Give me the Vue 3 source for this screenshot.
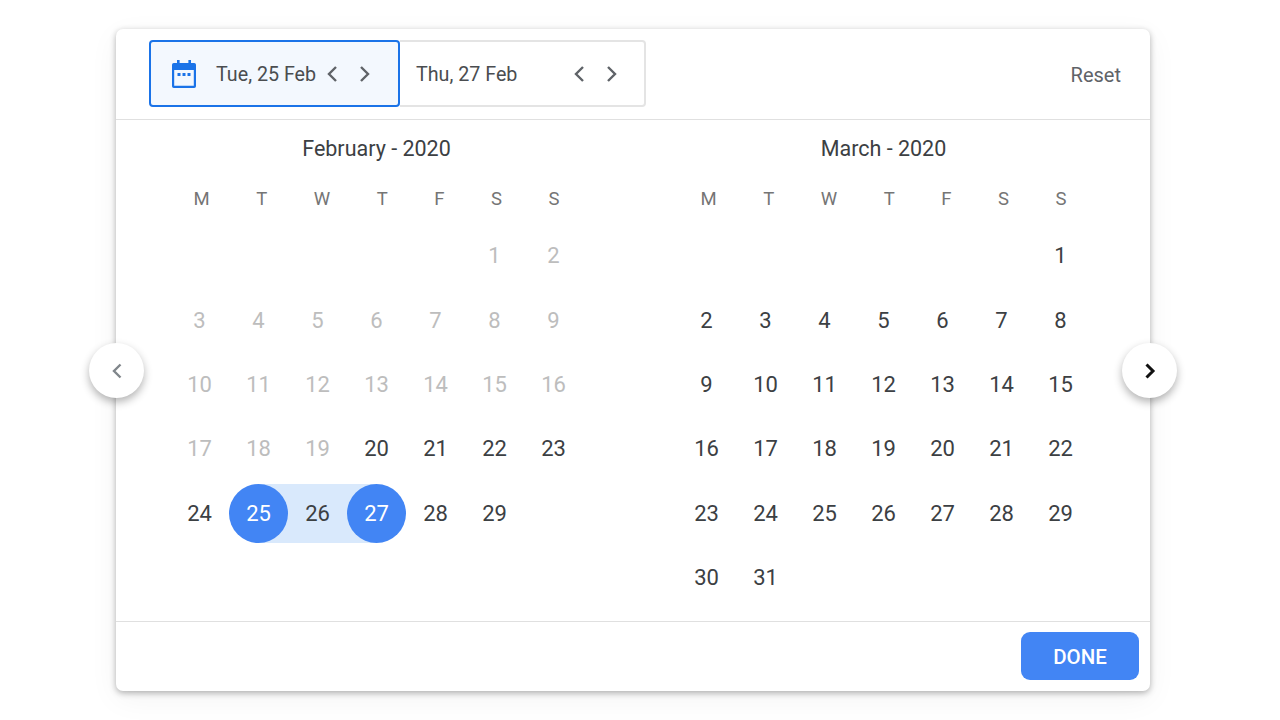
<template>
  <div class="page">
    <div class="picker">
      <header class="picker__head">
        <div class="range">
          <div class="range__tab range__tab--active">
            <svg class="range__icon" width="26" height="30" viewBox="0 0 26 30">
              <path fill="#1a73e8" fill-rule="evenodd" d="M6 1h2.6v3h8.8V1H20v3h3.2A1.8 1.8 0 0 1 25 5.8v21.4a1.8 1.8 0 0 1-1.8 1.8H2.8A1.8 1.8 0 0 1 1 27.200V5.800A1.800 1.800 0 0 1 2.800 4H6zM3.200 11v15.800h19.600V11z" />
              <rect x="6.500" y="14" width="3" height="3" fill="#1a73e8" />
              <rect x="11.500" y="14" width="3" height="3" fill="#1a73e8" />
              <rect x="16.500" y="14" width="3" height="3" fill="#1a73e8" />
            </svg>
            <span class="range__date">Tue, 25 Feb</span>
            <span class="range__arrows range__arrows--tight">
              <svg width="12" height="18" viewBox="0 0 12 18"><path class="chev" d="M10 2 3 9l7 7" /></svg>
              <svg width="12" height="18" viewBox="0 0 12 18"><path class="chev" d="M2 2l7 7-7 7" /></svg>
            </span>
          </div>
          <div class="range__tab range__tab--end">
            <span class="range__date">Thu, 27 Feb</span>
            <span class="range__arrows">
              <svg width="12" height="18" viewBox="0 0 12 18"><path class="chev" d="M10 2 3 9l7 7" /></svg>
              <svg width="12" height="18" viewBox="0 0 12 18"><path class="chev" d="M2 2l7 7-7 7" /></svg>
            </span>
          </div>
        </div>
        <span class="picker__reset">Reset</span>
      </header>

      <div class="picker__body">
        <section v-for="month in months" :key="month.title" class="month">
          <h3 class="month__title">{{ month.title }}</h3>
          <div class="month__week">
            <span v-for="(d, idx) in weekDays" :key="idx">{{ d }}</span>
          </div>
          <div class="month__grid">
            <div
              v-for="(cell, idx) in month.cells"
              :key="idx"
              class="day"
              :class="cell ? {
                'day--off': cell.off,
                'day--from': cell.mark === 'from',
                'day--mid': cell.mark === 'mid',
                'day--to': cell.mark === 'to',
              } : null"
            >
              <span v-if="cell" class="day__num">{{ cell.n }}</span>
            </div>
          </div>
        </section>
      </div>

      <footer class="picker__foot">
        <button class="done">DONE</button>
      </footer>

      <button class="nav nav--prev">
        <svg width="14" height="18" viewBox="0 0 14 18"><path class="chev chev--grey" d="M10.500 2.500 4 9l6.500 6.500" /></svg>
      </button>
      <button class="nav nav--next">
        <svg width="14" height="18" viewBox="0 0 14 18"><path class="chev chev--dark" d="M3.500 2.500 10 9l-6.500 6.500" /></svg>
      </button>
    </div>
  </div>
</template>

<script setup>
const weekDays = ['M', 'T', 'W', 'T', 'F', 'S', 'S']

function buildMonth(title, lead, total, opts = {}) {
  const cells = Array(lead).fill(null)
  for (let n = 1; n <= total; n++) {
    let mark = null
    if (opts.from === n) mark = 'from'
    else if (opts.to === n) mark = 'to'
    else if (n > opts.from && n < opts.to) mark = 'mid'
    cells.push({ n, off: n < (opts.firstActive || 0), mark })
  }
  return { title, cells }
}

const months = [
  buildMonth('February - 2020', 5, 29, { firstActive: 20, from: 25, to: 27 }),
  buildMonth('March - 2020', 6, 31),
]
</script>

<style scoped>
.page {
  width: 1280px;
  height: 720px;
  padding-top: 29px;
  box-sizing: border-box;
  background: #fff;
  font-family: Roboto, "Liberation Sans", sans-serif;
  color: #3c4043;
  overflow: hidden;
}

.picker {
  position: relative;
  width: 1034px;
  height: 662px;
  margin-left: 116px;
  display: flex;
  flex-direction: column;
  background: #fff;
  border-radius: 7px;
  box-shadow: 0 2px 6px rgba(0, 0, 0, 0.3), 0 8px 30px rgba(0, 0, 0, 0.05);
}

.picker__head {
  height: 91px;
  box-sizing: border-box;
  flex: none;
  display: flex;
  align-items: center;
  justify-content: space-between;
  padding: 0 29px 0 33px;
  border-bottom: 1px solid #e0e0e0;
}

.range {
  display: flex;
  height: 67px;
  margin-top: -2px;
}

.range__tab {
  box-sizing: border-box;
  display: flex;
  align-items: center;
  padding-top: 2px;
  border: 2px solid #e4e4e4;
  font-size: 19.700px;
  color: #4a4d50;
}

.range__tab--active {
  width: 251px;
  padding-left: 20px;
  background: #f3f8fe;
  border-color: #1a73e8;
  border-radius: 4px;
}

.range__tab--end {
  width: 246px;
  padding-left: 16px;
  border-left: 0;
  border-radius: 0 4px 4px 0;
}

.range__icon {
  flex: none;
  margin-right: 19px;
}

.range__date {
  flex: none;
  white-space: nowrap;
}

.range__arrows {
  display: flex;
  gap: 21px;
  margin-left: 56px;
}

.range__arrows--tight {
  margin-left: 10px;
  gap: 21px;
}

.chev {
  fill: none;
  stroke: #5f6368;
  stroke-width: 2.400;
}

.chev--grey {
  stroke: #80868b;
}

.chev--dark {
  stroke: #111;
  stroke-width: 3;
}

.picker__reset {
  padding-top: 2px;
  font-size: 20px;
  color: #5f6368;
}

.picker__body {
  flex: 1;
  display: flex;
  gap: 94px;
  padding-left: 54px;
}

.month {
  width: 413px;
}

.month__title {
  margin: 0;
  height: 57px;
  line-height: 57px;
  text-align: center;
  font-size: 21.500px;
  font-weight: 400;
  color: #3c4043;
}

.month__week {
  display: flex;
  gap: 46.500px;
  height: 43px;
  align-items: center;
  padding-left: 23.500px;
  margin-bottom: 6.300px;
  font-size: 18.500px;
  color: #757575;
}

.month__grid {
  display: grid;
  grid-template-columns: repeat(7, 59px);
  grid-auto-rows: 59px;
  row-gap: 5.400px;
}

.day {
  position: relative;
  display: flex;
  align-items: center;
  justify-content: center;
  font-size: 22px;
  color: #3c4043;
}

.day__num {
  position: relative;
  z-index: 1;
}

.day--off {
  color: #bdbdbd;
}

.day--mid {
  background: #d9e9fc;
}

.day--from {
  background: linear-gradient(90deg, transparent 50%, #d9e9fc 50%);
}

.day--to {
  background: linear-gradient(90deg, #d9e9fc 50%, transparent 50%);
}

.day--from,
.day--to {
  color: #fff;
}

.day--from::before,
.day--to::before {
  content: '';
  position: absolute;
  inset: 0;
  border-radius: 50%;
  background: #4285f4;
}

.picker__foot {
  flex: none;
  height: 70px;
  box-sizing: border-box;
  display: flex;
  justify-content: flex-end;
  align-items: flex-start;
  padding: 10px 11px 0 0;
  border-top: 1px solid #e0e0e0;
}

.done {
  width: 118px;
  height: 48px;
  padding: 2px 0 0;
  border: 0;
  border-radius: 9px;
  background: #4285f4;
  color: #fff;
  font-family: inherit;
  font-size: 20.500px;
  font-weight: 500;
  letter-spacing: 0;
}

.nav {
  position: absolute;
  top: 314px;
  width: 55px;
  height: 55px;
  padding: 0;
  border: 0;
  border-radius: 50%;
  background: #fff;
  display: flex;
  align-items: center;
  justify-content: center;
  box-shadow: 0 4px 9px rgba(0, 0, 0, 0.3);
}

.nav--prev {
  left: -27px;
}

.nav--next {
  right: -27px;
}
</style>
